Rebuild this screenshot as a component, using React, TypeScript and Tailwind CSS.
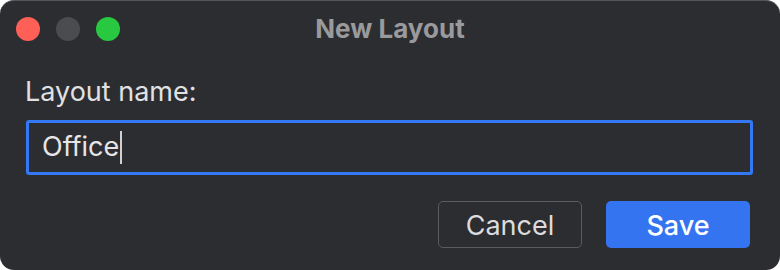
export default function App() {
  return (
    <div className="h-[270px] w-[780px] bg-white">
      <div
        className="flex h-full w-full flex-col overflow-hidden rounded-[14px] border-t border-[#55565a] bg-[#2c2d31] text-[#e1e1e3]"
        style={{ fontFamily: 'Inter, "Noto Sans", sans-serif' }}
      >
        <div className="grid h-[55px] grid-cols-[1fr_auto_1fr] items-center">
          <div className="flex items-center gap-4 pl-4">
            <span className="h-6 w-6 rounded-full bg-[#fe5f57]" />
            <span className="h-6 w-6 rounded-full bg-[#4b4c50]" />
            <span className="h-6 w-6 rounded-full bg-[#28c840]" />
          </div>
          <h1 className="text-[26px] font-bold text-[#9a9a9d]">New Layout</h1>
          <div />
        </div>

        <div className="flex flex-col pl-[26px] pr-[27px]">
          <label className="-ml-[1px] mt-[19px] text-[27px] leading-[34px]">Layout name:</label>
          <div className="mt-[11px] flex h-[55px] items-center rounded-[3px] border-[3px] border-[#3478f6] pl-[13px]">
            <span className="text-[27px] text-[#e6e6e8]">Office</span>
            <span className="ml-[1px] h-[33px] w-[2px] bg-[#d0d0d2]" />
          </div>
          <div className="mt-[26px] flex justify-end gap-6 pr-[3px]">
            <button className="h-[47px] w-[144px] rounded-[5px] border border-[#5b5c60] pt-[3px] text-[27px] leading-[40px] text-[#dcdcde]">
              Cancel
            </button>
            <button className="h-[47px] w-[144px] rounded-[5px] bg-[#3574f0] pt-[3px] text-[27px] font-medium leading-[40px] text-white">
              Save
            </button>
          </div>
        </div>
      </div>
    </div>
  )
}
